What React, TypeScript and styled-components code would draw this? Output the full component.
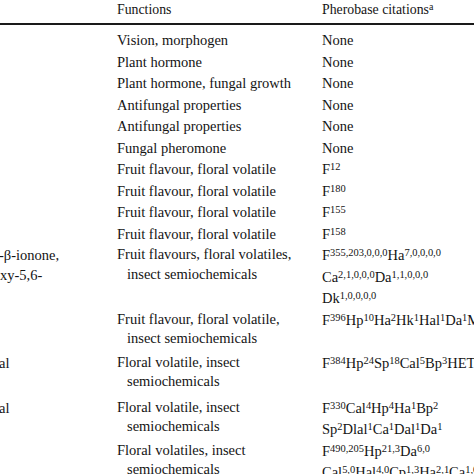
import styled, { createGlobalStyle } from "styled-components";

const Global = createGlobalStyle`
  html, body {
    margin: 0;
    padding: 0;
    background: #fff;
  }
`;

const Page = styled.div`
  width: 474px;
  height: 474px;
  overflow: hidden;
  font-family: "Liberation Serif", "Times New Roman", serif;
  color: #141414;
`;

const Head = styled.div`
  display: grid;
  grid-template-columns: 117px 205px 1fr;
  height: 23px;
  line-height: 19px;
  font-size: 13.8px;
  border-bottom: 2.5px solid #1a1a1a;
`;

const Body = styled.div`
  padding-top: 5px;
`;

const Row = styled.div<{ $pad?: number }>`
  display: grid;
  grid-template-columns: 117px 205px 1fr;
  font-size: 14.5px;
  padding-bottom: ${(p) => p.$pad ?? 0}px;
`;

const Compound = styled.div`
  line-height: 20px;
  white-space: nowrap;
  overflow: hidden;
  text-indent: -1px;
`;

const Func = styled.div<{ $multi?: boolean }>`
  line-height: ${(p) => (p.$multi ? "19.5px" : "21.5px")};
  padding-left: 10px;
  text-indent: -10px;
  white-space: nowrap;
`;

const Cite = styled.div`
  line-height: 21.5px;
  white-space: nowrap;
  overflow: hidden;
`;

const Sup = styled.span`
  font-size: 0.72em;
  line-height: 0;
  vertical-align: 0.42em;
`;

type Part = [string, string?];

function Citation({ parts }: { parts: Part[] }) {
  return (
    <>
      {parts.map(([base, sup], i) => (
        <span key={i}>
          {base}
          {sup && <Sup>{sup}</Sup>}
        </span>
      ))}
    </>
  );
}

const simple: [string, Part[] | null][] = [
  ["Vision, morphogen", null],
  ["Plant hormone", null],
  ["Plant hormone, fungal growth", null],
  ["Antifungal properties", null],
  ["Antifungal properties", null],
  ["Fungal pheromone", null],
  ["Fruit flavour, floral volatile", [["F", "12"]]],
  ["Fruit flavour, floral volatile", [["F", "180"]]],
  ["Fruit flavour, floral volatile", [["F", "155"]]],
  ["Fruit flavour, floral volatile", [["F", "158"]]],
];

export default function App() {
  return (
    <Page>
      <Global />
      <Head>
        <div />
        <div>Functions</div>
        <div>
          Pherobase citations<Sup>a</Sup>
        </div>
      </Head>
      <Body>
        {simple.map(([fn, cite], i) => (
          <Row key={i}>
            <Compound />
            <Func>{fn}</Func>
            <Cite>{cite ? <Citation parts={cite} /> : "None"}</Cite>
          </Row>
        ))}

        <Row>
          <Compound>
            -β-ionone,
            <br />
            xy-5,6-
          </Compound>
          <Func $multi>
            Fruit flavours, floral volatiles,
            <br />
            insect semiochemicals
          </Func>
          <Cite>
            <Citation parts={[["F", "355,203,0,0,0"], ["Ha", "7,0,0,0,0"]]} />
            <br />
            <Citation parts={[["Ca", "2,1,0,0,0"], ["Da", "1,1,0,0,0"]]} />
            <br />
            <Citation parts={[["Dk", "1,0,0,0,0"]]} />
          </Cite>
        </Row>

        <Row $pad={4}>
          <Compound />
          <Func $multi>
            Fruit flavour, floral volatile,
            <br />
            insect semiochemicals
          </Func>
          <Cite>
            <Citation
              parts={[
                ["F", "396"],
                ["Hp", "10"],
                ["Ha", "2"],
                ["Hk", "1"],
                ["Hal", "1"],
                ["Da", "1"],
                ["Mc", "1"],
              ]}
            />
          </Cite>
        </Row>

        <Row $pad={6}>
          <Compound>al</Compound>
          <Func $multi>
            Floral volatile, insect
            <br />
            semiochemicals
          </Func>
          <Cite>
            <Citation
              parts={[
                ["F", "384"],
                ["Hp", "24"],
                ["Sp", "18"],
                ["Cal", "5"],
                ["Bp", "3"],
                ["HET", "2"],
              ]}
            />
          </Cite>
        </Row>

        <Row>
          <Compound>al</Compound>
          <Func $multi>
            Floral volatile, insect
            <br />
            semiochemicals
          </Func>
          <Cite>
            <Citation
              parts={[
                ["F", "330"],
                ["Cal", "4"],
                ["Hp", "4"],
                ["Ha", "1"],
                ["Bp", "2"],
              ]}
            />
            <br />
            <Citation
              parts={[
                ["Sp", "2"],
                ["Dlal", "1"],
                ["Ca", "1"],
                ["Dal", "1"],
                ["Da", "1"],
              ]}
            />
          </Cite>
        </Row>

        <Row>
          <Compound />
          <Func $multi>
            Floral volatiles, insect
            <br />
            semiochemicals
          </Func>
          <Cite>
            <Citation parts={[["F", "490,205"], ["Hp", "21,3"], ["Da", "6,0"]]} />
            <br />
            <Citation
              parts={[
                ["Cal", "5,0"],
                ["Hal", "4,0"],
                ["Cp", "1,3"],
                ["Ha", "2,1"],
                ["Ca", "1,0"],
              ]}
            />
          </Cite>
        </Row>
      </Body>
    </Page>
  );
}
